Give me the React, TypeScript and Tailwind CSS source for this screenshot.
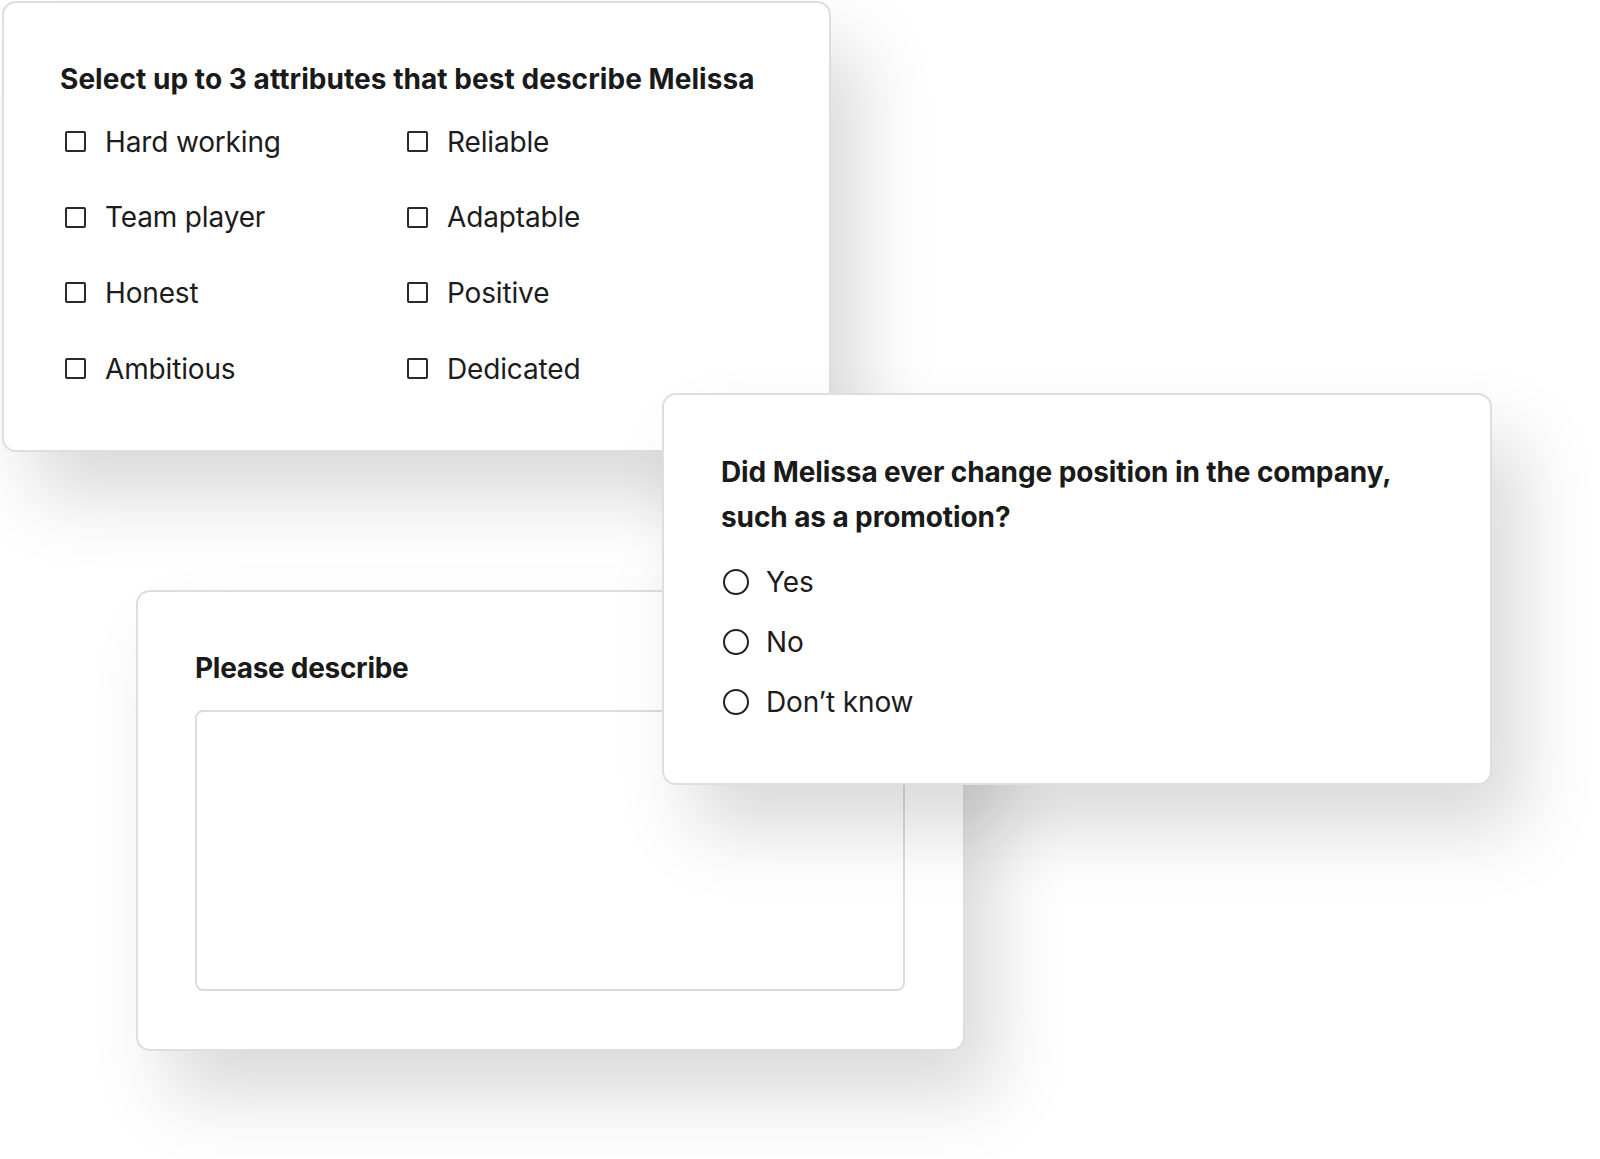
import React from "react";

const font = { fontFamily: "Inter, 'Noto Sans', 'Liberation Sans', sans-serif" };

function Checkbox({ label }: { label: string }) {
  return (
    <div className="flex items-center h-[75.6px] gap-[19px]">
      <span className="ml-[5px] w-[21px] h-[21px] border-2 border-[#2a2a2a] rounded-[2px] bg-white shrink-0" />
      <span className="text-[28px] leading-[36px] text-[#1c1c1c] font-normal tracking-[-0.15px]">{label}</span>
    </div>
  );
}

function Radio({ label }: { label: string }) {
  return (
    <div className="flex items-center h-[60px] gap-[17px]">
      <span className="ml-[2px] w-[26px] h-[26px] border-2 border-[#222] rounded-full bg-white shrink-0" />
      <span className="text-[28px] leading-[36px] text-[#1c1c1c] font-normal tracking-[-0.15px]">{label}</span>
    </div>
  );
}

export default function App() {
  const left = ["Hard working", "Team player", "Honest", "Ambitious"];
  const right = ["Reliable", "Adaptable", "Positive", "Dedicated"];
  return (
    <div className="relative w-[1600px] h-[1159px] bg-white overflow-hidden" style={font}>
      {/* Card 1 */}
      <div className="absolute left-[2px] top-[1px] w-[829px] h-[451px] z-10 bg-white border-2 border-[#dedede] rounded-[14px] shadow-[30px_45px_75px_rgba(0,0,0,0.15)] pl-[56px] pt-[58px]">
        <h2 className="text-[28px] leading-[36px] font-bold text-[#1a1a1a] tracking-[0.05px]">
          Select up to 3 attributes that best describe Melissa
        </h2>
        <div className="mt-[7px] grid grid-cols-[342px_1fr]">
          <div className="flex flex-col">
            {left.map((l) => (
              <Checkbox key={l} label={l} />
            ))}
          </div>
          <div className="flex flex-col">
            {right.map((l) => (
              <Checkbox key={l} label={l} />
            ))}
          </div>
        </div>
      </div>

      {/* Card 3 */}
      <div className="absolute left-[136px] top-[590px] w-[829px] h-[461px] z-20 bg-white border-2 border-[#dedede] rounded-[14px] shadow-[30px_45px_75px_rgba(0,0,0,0.15)] pl-[57px] pr-[58px] pt-[58px]">
        <h2 className="text-[28px] leading-[36px] font-bold text-[#1a1a1a] tracking-[-0.3px]">
          Please describe
        </h2>
        <div className="mt-[24px] w-[710px] h-[281px] border-2 border-[#dcdcdc] rounded-[8px] bg-white" />
      </div>

      {/* Card 2 */}
      <div className="absolute left-[662px] top-[393px] w-[830px] h-[392px] z-30 bg-white border-2 border-[#dedede] rounded-[14px] shadow-[30px_45px_75px_rgba(0,0,0,0.15)] pl-[57px] pt-[55px]">
        <h2 className="text-[28px] leading-[45px] font-bold text-[#1a1a1a] tracking-[-0.1px]">
          Did Melissa ever change position in the company,
          <br />
          such as a promotion?
        </h2>
        <div className="mt-[12px] flex flex-col">
          <Radio label="Yes" />
          <Radio label="No" />
          <Radio label="Don’t know" />
        </div>
      </div>
    </div>
  );
}
